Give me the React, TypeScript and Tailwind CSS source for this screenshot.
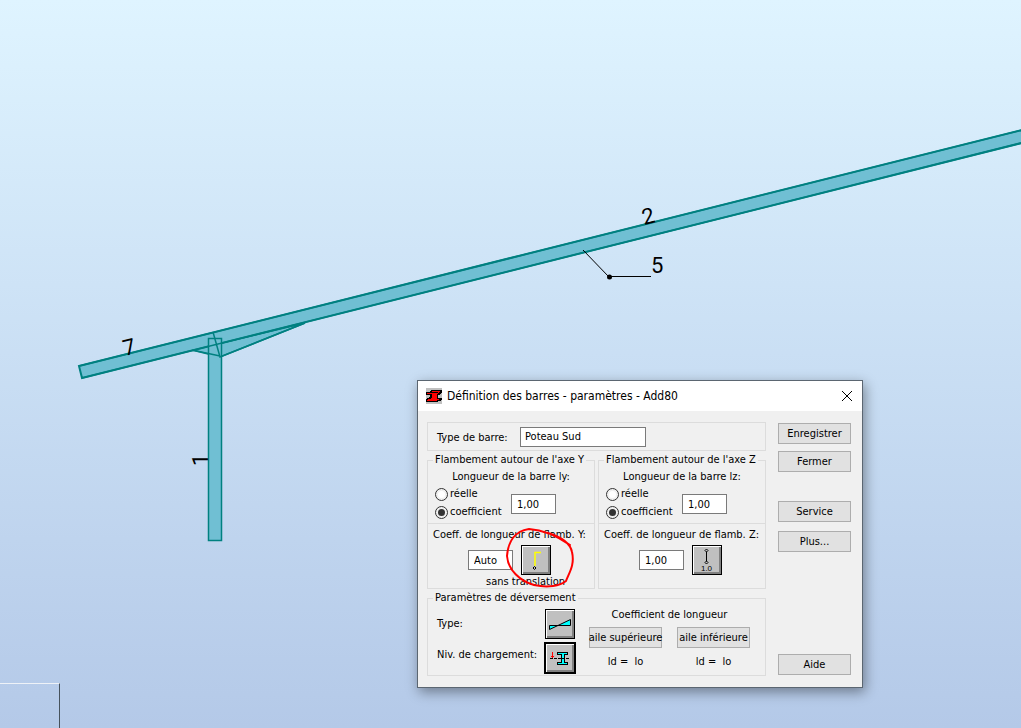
import { useState, type ReactNode } from "react";

type Buckling = "real" | "coefficient";

function BarIcon() {
    return (
        <svg width="16" height="16" viewBox="0 0 16 16" shapeRendering="crispEdges" aria-hidden="true">
            <rect width="16" height="16" fill="#c0c0c0" />
            <path d="M0 4h3l3-2h10v3l-3 2h-1v3h4v2l-5 2H0v-3l4-2V7H0z" fill="#000" />
            <path d="M1 5h9l3-1v1l-2 1v5h3l-4 2H1v-1l5-2V6H1z" fill="#f00" />
            <path d="M4 4l3-1h7v1z" fill="#f00" />
        </svg>
    );
}

function NoSwayIcon() {
    return (
        <svg width="28" height="28" viewBox="1 1 28 28" aria-hidden="true">
            <path d="M20 7.5H14V21" fill="none" stroke="#ff0" strokeWidth="1.5" />
            <path d="M13.5 21.5l1.5 1.5-1.5 1.5L12 23z" fill="#c0c0c0" stroke="#000" />
        </svg>
    );
}

function PinnedIcon() {
    return (
        <svg width="28" height="28" viewBox="1 1 28 28" aria-hidden="true">
            <path d="M14.5 6v12" stroke="#000" />
            <path d="M14.5 4l1.5 1.5L14.5 7 13 5.5zM14.5 16l1.5 1.5-1.5 1.5-1.5-1.5z" fill="#c0c0c0" stroke="#000" />
            <text x="14.5" y="26" textAnchor="middle" className="font-['Liberation_Sans',sans-serif] text-[8px]">
                1.0
            </text>
        </svg>
    );
}

function LateralIcon() {
    return (
        <svg width="28" height="28" viewBox="1 1 28 28" aria-hidden="true">
            <path d="M4.5 16.5h21v-6l-21 10z" fill="#0ff" stroke="#000" />
        </svg>
    );
}

function LoadLevelIcon() {
    return (
        <svg width="28" height="28" viewBox="2 2 28 28" shapeRendering="crispEdges" aria-hidden="true">
            <path d="M13.5 10.5h10v2h-3v8h3v2h-10v-2h4v-8h-4z" fill="#0ff" stroke="#000" />
            <path d="M6 16.5h20" stroke="#000" strokeDasharray="3 1" />
            <path d="M8 10h1v4h1v1H9v1H8v-1H7v-1h1z" fill="#f00" />
        </svg>
    );
}

function IconButton({ label, focused, children }: { label: string; focused?: boolean; children: ReactNode }) {
    return (
        <button
            type="button"
            aria-label={label}
            className={`shrink-0 border-black bg-[#c0c0c0] shadow-[inset_1px_1px_0_#fff,inset_-2px_-2px_0_#808080] ${
                focused ? "border-2" : "border"
            }`}
        >
            {children}
        </button>
    );
}

function PushButton({ className = "", children }: { className?: string; children: ReactNode }) {
    return (
        <button
            type="button"
            className={`flex h-[21px] w-[73px] items-center justify-center border border-[#adadad] bg-[#e1e1e1] whitespace-nowrap ${className}`}
        >
            {children}
        </button>
    );
}

function TextBox({ label, value, className }: { label: string; value: string; className: string }) {
    return (
        <input
            type="text"
            aria-label={label}
            defaultValue={value}
            className={`h-5 border border-[#7a7a7a] bg-white px-[5px] outline-none ${className}`}
        />
    );
}

function Radio({
    name,
    label,
    checked,
    onChange,
}: {
    name: string;
    label: string;
    checked: boolean;
    onChange: () => void;
}) {
    return (
        <label className="flex h-[18px] items-center gap-[2px]">
            <input
                type="radio"
                name={name}
                checked={checked}
                onChange={onChange}
                className="size-[13px] appearance-none rounded-full border border-[#333] bg-white bg-clip-content p-[2px] checked:bg-[#333]"
            />
            {label}
        </label>
    );
}

function BucklingGroup({
    axis,
    coefficient,
    note,
    icon,
}: {
    axis: "Y" | "Z";
    coefficient: string;
    note?: string;
    icon: ReactNode;
}) {
    const [mode, setMode] = useState<Buckling>("coefficient");

    return (
        <fieldset className="h-[136px] min-w-0 flex-1 border border-[#dcdcdc]">
            <legend className="ml-[5px] h-[14px] px-[2px]">Flambement autour de l&apos;axe {axis}</legend>
            <p className="mt-[3px] text-center">Longueur de la barre l{axis.toLowerCase()}:</p>
            <div className="mt-px flex h-[39px] items-start border-b border-[#dcdcdc] pl-[7px]">
                <div className="w-[76px]">
                    <Radio
                        name={`mode-${axis}`}
                        label="réelle"
                        checked={mode === "real"}
                        onChange={() => setMode("real")}
                    />
                    <Radio
                        name={`mode-${axis}`}
                        label="coefficient"
                        checked={mode === "coefficient"}
                        onChange={() => setMode("coefficient")}
                    />
                </div>
                <TextBox label={`Longueur l${axis.toLowerCase()}`} value="1,00" className="mt-[9px] w-[45px]" />
            </div>
            <p className="mt-1 pl-[5px] whitespace-nowrap">Coeff. de longueur de flamb. {axis}:</p>
            <div className="mt-[3px] flex items-center gap-2 pl-10">
                <TextBox label={`Coefficient ${axis}`} value={coefficient} className="w-[45px]" />
                <IconButton label={`Type de flambement ${axis}`}>{icon}</IconButton>
            </div>
            {note && <p className="pl-[58px] whitespace-nowrap">{note}</p>}
        </fieldset>
    );
}

function Structure() {
    return (
        <svg className="absolute inset-0 h-full w-full" role="img" aria-label="Structure">
            <g fill="#70bfd3" stroke="#008080">
                <path d="M192 350L220 357L305 323z" strokeWidth="1.5" />
                <path d="M79 366L2021 -120V-107L82 378z" strokeWidth="2" />
                <rect x="208.5" y="338.5" width="13" height="202" strokeWidth="1.5" />
                <path
                    d="M79 366L2021 -120M82 378L2021 -107M213 332L220 357L305 323M192 350L220 356"
                    fill="none"
                    strokeWidth="1.5"
                />
            </g>
            <g fill="none" stroke="#000">
                <path d="M583 250L609 277" />
                <path d="M609 276.5H651" />
            </g>
            <circle cx="609.5" cy="277" r="2.5" />
            <g className="font-[Roboto,sans-serif] text-[22px]">
                <text transform="translate(644 225) rotate(-14)">2</text>
                <text x="651" y="273">5</text>
                <text transform="translate(125 356) rotate(-14)">7</text>
                <text transform="translate(208 466) rotate(-90)">1</text>
            </g>
        </svg>
    );
}

function BarDialog() {
    return (
        <section
            role="dialog"
            aria-labelledby="dialog-title"
            className="absolute top-[380px] left-[417px] w-[446px] border border-[#5b6671] bg-[#f0f0f0] shadow-[2px_4px_12px_rgba(0,0,0,0.4)]"
        >
            <header className="flex h-[30px] items-center bg-white pr-[9px] pl-2">
                <BarIcon />
                <h2 id="dialog-title" className="ml-[5px] flex-1 text-[12px]">
                    Définition des barres - paramètres - Add80
                </h2>
                <button type="button" aria-label="Close">
                    <svg width="12" height="12" viewBox="0 0 12 12" aria-hidden="true">
                        <path d="M1 1l10 10M11 1L1 11" stroke="#000" />
                    </svg>
                </button>
            </header>

            <div className="flex gap-3 pt-[11px] pr-[11px] pb-[11px] pl-[9px]">
                <div className="flex min-w-0 flex-1 flex-col gap-[2px]">
                    <div className="flex h-[29px] items-center border border-[#dcdcdc] pl-[9px]">
                        <label htmlFor="bar-type" className="w-[83px] pt-[2px]">
                            Type de barre:
                        </label>
                        <input
                            id="bar-type"
                            type="text"
                            defaultValue="Poteau Sud"
                            className="h-5 w-[126px] border border-[#7a7a7a] bg-white px-1 outline-none"
                        />
                    </div>

                    <div className="flex gap-[3px]">
                        <BucklingGroup axis="Y" coefficient="Auto" note="sans translation" icon={<NoSwayIcon />} />
                        <BucklingGroup axis="Z" coefficient="1,00" icon={<PinnedIcon />} />
                    </div>

                    <fieldset className="h-[85px] min-w-0 border border-[#dcdcdc]">
                        <legend className="ml-[5px] h-[14px] px-[2px]">Paramètres de déversement</legend>
                        <div className="flex">
                            <div className="w-[161px] pl-[9px]">
                                <div className="flex h-[37px] items-center justify-between pr-[14px]">
                                    <span>Type:</span>
                                    <IconButton label="Type">
                                        <LateralIcon />
                                    </IconButton>
                                </div>
                                <div className="flex h-8 justify-between pr-[13px]">
                                    <span className="mt-[6px] whitespace-nowrap">Niv. de chargement:</span>
                                    <IconButton label="Niv. de chargement" focused>
                                        <LoadLevelIcon />
                                    </IconButton>
                                </div>
                            </div>
                            <div className="pt-[3px] text-center">
                                <p>Coefficient de longueur</p>
                                <div className="mt-[5px] flex gap-[15px]">
                                    <div>
                                        <PushButton>aile supérieure</PushButton>
                                        <p className="mt-[7px]">ld =&nbsp; lo</p>
                                    </div>
                                    <div>
                                        <PushButton>aile inférieure</PushButton>
                                        <p className="mt-[7px]">ld =&nbsp; lo</p>
                                    </div>
                                </div>
                            </div>
                        </div>
                    </fieldset>
                </div>

                <div className="flex flex-col pt-px">
                    <PushButton>Enregistrer</PushButton>
                    <PushButton className="mt-[7px]">Fermer</PushButton>
                    <PushButton className="mt-[29px]">Service</PushButton>
                    <PushButton className="mt-[9px]">Plus...</PushButton>
                    <PushButton className="mt-auto mb-px">Aide</PushButton>
                </div>
            </div>
        </section>
    );
}

export default function App() {
    return (
        <main className="relative min-h-screen overflow-hidden bg-linear-to-b from-[#dff4ff] to-[#b4c9e8] font-['DejaVu_Sans_Condensed','Noto_Sans',sans-serif] text-[11px] leading-[14px] text-black">
            <Structure />
            <div className="absolute bottom-0 left-0 h-[45px] w-[60px] border-t border-r border-t-[#eef2f7] border-r-[#46525c]" />
            <BarDialog />
            {/* hand-drawn mark around the Y buckling type */}
            <svg className="pointer-events-none absolute inset-0 h-full w-full" aria-hidden="true">
                <path
                    d="M570 545C560 538 546 530 529 529C514 531 508 543 507 556C508 570 520 581 534 585C548 588 560 586 566 581C569 573 575 565 572 552C570 542 558 536 548 533"
                    fill="none"
                    stroke="#f00"
                    strokeWidth="2"
                    strokeLinecap="round"
                />
            </svg>
        </main>
    );
}
